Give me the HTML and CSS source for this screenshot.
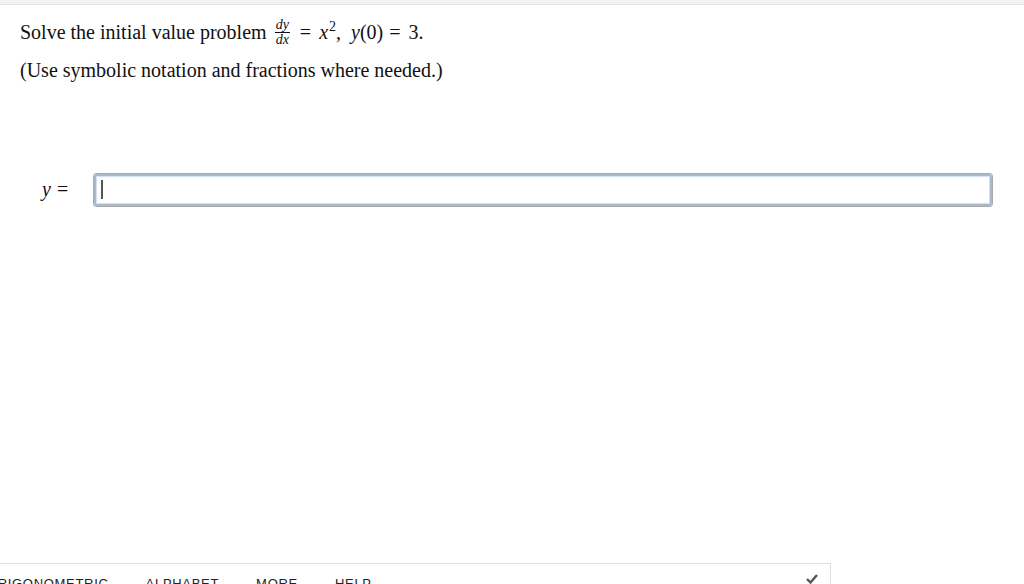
FILE: index.html
```html
<!DOCTYPE html>
<html lang="en">
<head>
    <meta charset="UTF-8">
    <meta name="viewport" content="width=device-width, initial-scale=1.0">
    <title>Initial value problem</title>
    <link rel="stylesheet" href="styles.css">
</head>
<body>

<div class="page">
    <div class="topbar"></div>

    <div class="question">
        <p class="prompt">
            Solve the initial value problem
            <span class="frac"><span class="num">dy</span><span class="den">dx</span></span><span class="op">=</span><i>x</i><sup>2</sup>,<i class="gap">y</i>(0)<span class="op">=</span>3.
        </p>
        <p class="hint">(Use symbolic notation and fractions where needed.)</p>
    </div>

    <div class="answer-row">
        <label class="answer-label" for="answer"><i>y</i><span class="eq">=</span></label>
        <div class="answer-box" id="answer"><span class="caret"></span></div>
    </div>

    <div class="keyboard">
        <div class="tabs">
            <span class="tab tab-first">TRIGONOMETRIC</span>
            <span class="tab">ALPHABET</span>
            <span class="tab">MORE</span>
            <span class="tab">HELP</span>
        </div>
        <svg class="toggle" width="12" height="10" viewBox="0 0 12 10">
            <path d="M1 5 L4.5 8.5 L11 1" fill="none" stroke="#555" stroke-width="2.4"/>
        </svg>
    </div>
</div>

</body>
</html>
```

FILE: styles.css
```css
html, body {
    margin: 0;
    padding: 0;
    background-color: white;
    overflow: hidden;
}
.page {
    height: 584px;
    display: flex;
    flex-direction: column;
    font-family: "Liberation Serif", "Times New Roman", serif;
    color: #111;
}
.topbar {
    height: 4px;
    background-color: #f2f2f2;
    border-bottom: 1px solid #e4e4e4;
}
.question {
    padding: 0 20px;
}
.prompt {
    font-size: 20px;
    margin: 12px 0 0 0;
    line-height: 30px;
}
.frac {
    display: inline-flex;
    flex-direction: column;
    align-items: center;
    vertical-align: middle;
    font-style: italic;
    font-size: 14px;
    line-height: 12px;
    margin: 0 4px 0 3px;
    position: relative;
    top: -2px;
}
.frac .num {
    border-bottom: 1px solid #111;
    padding: 0 1px 1px 1px;
}
.frac .den {
    padding-top: 1px;
}
.op {
    margin: 0 8px 0 6px;
}
.prompt sup {
    font-size: 14px;
    line-height: 0;
    margin-left: 1px;
}
.gap {
    margin-left: 10px;
}
.hint {
    font-size: 20px;
    margin: 10px 0 0 0;
    line-height: 24px;
}
.answer-row {
    display: flex;
    align-items: center;
    margin-top: 92px;
    padding-left: 42px;
}
.answer-label {
    font-size: 20px;
    width: 52px;
}
.answer-label .eq {
    margin-left: 6px;
}
.answer-box {
    width: 889px;
    height: 28px;
    border: 2px solid #aab8cf;
    box-shadow: 0 0 0 1px #a9a9a9, inset 0 0 0 1px #d4e0f4;
    border-radius: 3px;
    display: flex;
    align-items: center;
    padding-left: 5px;
}
.caret {
    width: 2px;
    height: 19px;
    background-color: #555;
}
.keyboard {
    margin-top: auto;
    width: 830px;
    height: 20px;
    border-top: 1px solid #dedede;
    border-right: 1px solid #dedede;
    display: flex;
    justify-content: space-between;
    align-items: flex-start;
}
.tabs {
    display: flex;
    font-family: "Liberation Sans", Arial, sans-serif;
    font-size: 13px;
    letter-spacing: 0.7px;
    color: #222;
    padding-top: 12px;
}
.tab {
    margin-right: 37px;
}
.tab-first {
    margin-left: -11px;
}
.toggle {
    margin: 10px 12px 0 0;
}
```
